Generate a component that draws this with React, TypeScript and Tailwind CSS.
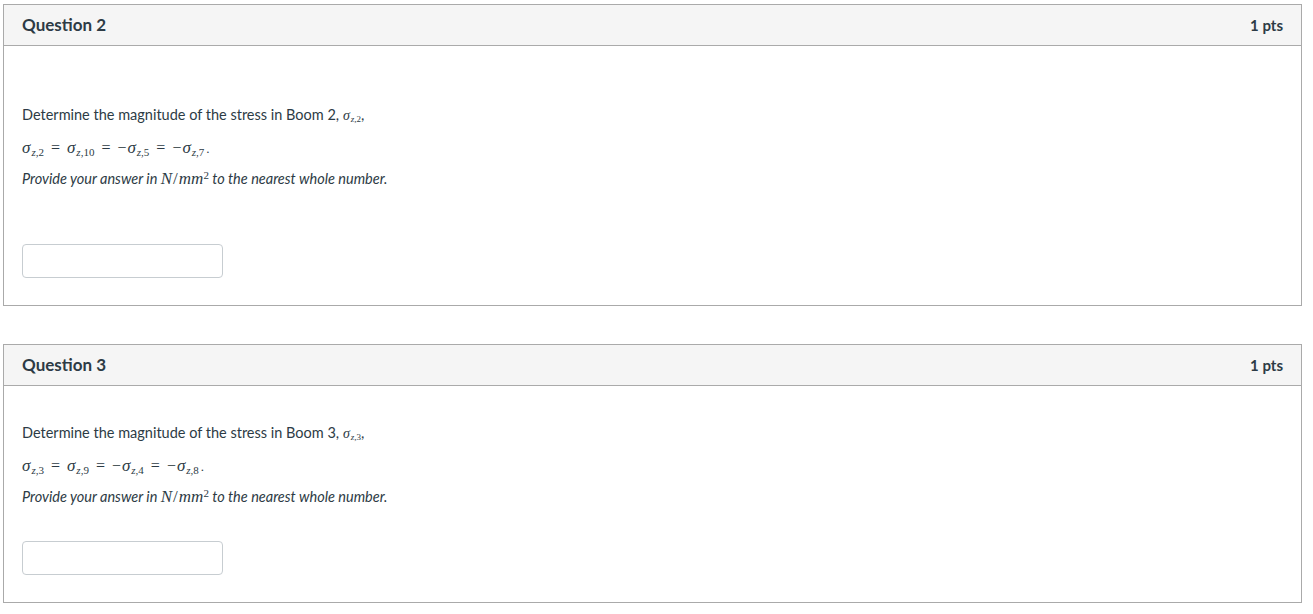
import React from 'react';

const serif = { fontFamily: '"Liberation Serif", "DejaVu Serif", serif' };

// small inline-math helpers (serif italic sigma with a subscript)
function Sigma({ sub, small }: { sub: string; small?: boolean }) {
    return (
        <span className={small ? 'text-[14px]' : 'text-[17px]'} style={serif}>
            <i>σ</i>
            <sub className={small ? 'text-[9px] ml-[1px]' : 'text-[11px] ml-[1px]'}>
                <i>z</i>,{sub}
            </sub>
        </span>
    );
}

function Op({ c }: { c: string }) {
    return (
        <span className="mx-[7px] text-[16px]" style={serif}>
            {c}
        </span>
    );
}

function Minus() {
    return (
        <span className="text-[16px] mr-[1px]" style={serif}>
            −
        </span>
    );
}

interface Question {
    id: number;
    boom: number;
    chain: string[];
    topPad: string;
    inputGap: string;
}

const questions: Question[] = [
    { id: 2, boom: 2, chain: ['2', '10', '5', '7'], topPad: 'pt-[59px]', inputGap: 'mt-[55px]' },
    { id: 3, boom: 3, chain: ['3', '9', '4', '8'], topPad: 'pt-[37px]', inputGap: 'mt-[34px]' },
];

function QuestionCard({ q }: { q: Question }) {
    return (
        <div className="border border-[#aaaaaa] bg-white w-[1299px]">
            {/* Header */}
            <div className="h-[41px] bg-[#f5f5f5] border-b border-[#aaaaaa] flex items-center justify-between pl-[18px] pr-[18px]">
                <h2 className="text-[17px] font-bold text-[#2d3b45]">Question {q.id}</h2>
                <span className="text-[15px] font-bold text-[#2d3b45]">1 pts</span>
            </div>

            {/* Body */}
            <div className={`${q.topPad} pb-[27px] pl-[18px] text-[14.5px] text-[#2d3b45]`}>
                <p className="h-[20px] leading-[20px]">
                    Determine the magnitude of the stress in Boom {q.boom}, <Sigma sub={String(q.boom)} small />,
                </p>
                <p className="h-[20px] leading-[20px] mt-[13px]">
                    <Sigma sub={q.chain[0]} />
                    <Op c="=" />
                    <Sigma sub={q.chain[1]} />
                    <Op c="=" />
                    <Minus />
                    <Sigma sub={q.chain[2]} />
                    <Op c="=" />
                    <Minus />
                    <Sigma sub={q.chain[3]} />
                    <span className="text-[13px] ml-[2px]" style={serif}>.</span>
                </p>
                <p className="h-[20px] leading-[20px] mt-[11px] italic">
                    Provide your answer in{' '}
                    <span className="text-[17px]" style={serif}>
                        N<span className="not-italic mx-[1px]">/</span>mm<sup className="not-italic text-[11px]">2</sup>
                    </span>{' '}
                    to the nearest whole number.
                </p>
                <input
                    type="text"
                    className={`${q.inputGap} block w-[201px] h-[34px] border border-[#c7cdd1] rounded-[4px] bg-white`}
                />
            </div>
        </div>
    );
}

export default function App() {
    return (
        <div className="min-h-[614px] bg-white pt-[4px] pl-[3px]" style={{ fontFamily: 'Lato, "Liberation Sans", sans-serif' }}>
            <div className="flex flex-col gap-[38px]">
                {questions.map((q) => (
                    <QuestionCard key={q.id} q={q} />
                ))}
            </div>
        </div>
    );
}
